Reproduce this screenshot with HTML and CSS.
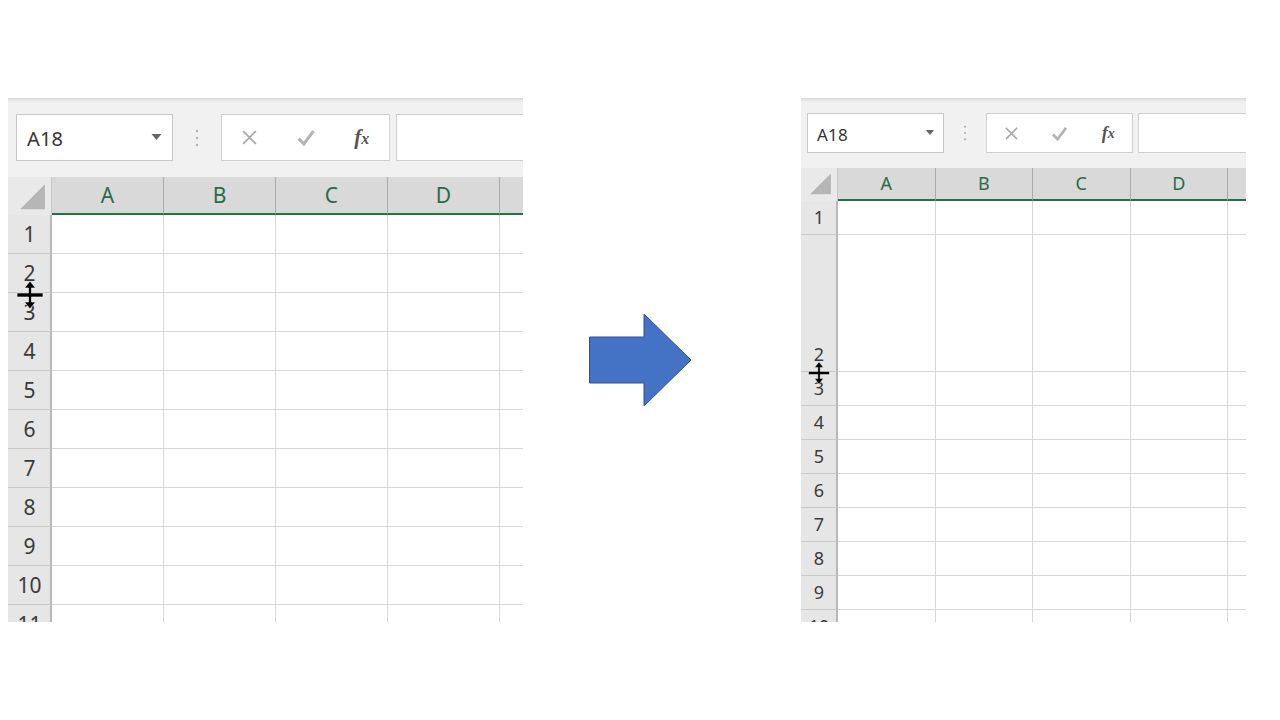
FILE: index.html
```html
<!DOCTYPE html>
<html lang="ja">
<head>
<meta charset="utf-8">
<title>Row height change</title>
<link rel="stylesheet" href="styles.css">
</head>
<body>
<div class="page">
  <div class="sheet sheet-before">
    <div class="toolbar">
      <div class="namebox"><span class="name">A18</span><svg class="dd" viewBox="0 0 10 6"><path d="M0 0H10L5 6Z"/></svg></div>
      <svg class="dots" viewBox="0 0 6 18"><circle cx="3" cy="2" r="1.2"/><circle cx="3" cy="9" r="1.2"/><circle cx="3" cy="16" r="1.2"/></svg>
      <div class="fbtns">
        <span class="fbtn"><svg class="ic-x" viewBox="0 0 16 16"><path d="M2 2L14 14M14 2L2 14"/></svg></span>
        <span class="fbtn"><svg class="ic-ok" viewBox="0 0 18 16"><path d="M2 9L7 14L16 2"/></svg></span>
        <span class="fbtn fx"><span class="f">f</span><span class="x">x</span></span>
      </div>
      <div class="finput"></div>
    </div>
    <div class="grid">
      <div class="hrow"><div class="corner"><svg class="tri" viewBox="0 0 10 10"><path d="M10 0V10H0Z"/></svg></div><div class="ch">A</div><div class="ch">B</div><div class="ch">C</div><div class="ch">D</div><div class="ch part"></div></div>
      <div class="row"><div class="rh"><span>1</span></div><div class="c"></div><div class="c"></div><div class="c"></div><div class="c"></div><div class="c part"></div></div>
      <div class="row"><div class="rh"><span>2</span></div><div class="c"></div><div class="c"></div><div class="c"></div><div class="c"></div><div class="c part"></div></div>
      <div class="row"><div class="rh"><span>3</span></div><div class="c"></div><div class="c"></div><div class="c"></div><div class="c"></div><div class="c part"></div></div>
      <div class="row"><div class="rh"><span>4</span></div><div class="c"></div><div class="c"></div><div class="c"></div><div class="c"></div><div class="c part"></div></div>
      <div class="row"><div class="rh"><span>5</span></div><div class="c"></div><div class="c"></div><div class="c"></div><div class="c"></div><div class="c part"></div></div>
      <div class="row"><div class="rh"><span>6</span></div><div class="c"></div><div class="c"></div><div class="c"></div><div class="c"></div><div class="c part"></div></div>
      <div class="row"><div class="rh"><span>7</span></div><div class="c"></div><div class="c"></div><div class="c"></div><div class="c"></div><div class="c part"></div></div>
      <div class="row"><div class="rh"><span>8</span></div><div class="c"></div><div class="c"></div><div class="c"></div><div class="c"></div><div class="c part"></div></div>
      <div class="row"><div class="rh"><span>9</span></div><div class="c"></div><div class="c"></div><div class="c"></div><div class="c"></div><div class="c part"></div></div>
      <div class="row"><div class="rh"><span>10</span></div><div class="c"></div><div class="c"></div><div class="c"></div><div class="c"></div><div class="c part"></div></div>
      <div class="row"><div class="rh"><span>11</span></div><div class="c"></div><div class="c"></div><div class="c"></div><div class="c"></div><div class="c part"></div></div>
    </div>
    <svg class="cursor" viewBox="0 0 30 30"><path class="cur" d="M15 1L9.5 8H13.5V13H2V17H13.5V22H9.5L15 29L20.5 22H16.5V17H28V13H16.5V8H20.5Z"/></svg>
  </div>

  <svg class="arrow" viewBox="0 0 103 94"><path d="M0.5 24H55V1L102 47L55 93V70H0.5Z"/></svg>

  <div class="sheet sheet-after">
    <div class="toolbar">
      <div class="namebox"><span class="name">A18</span><svg class="dd" viewBox="0 0 10 6"><path d="M0 0H10L5 6Z"/></svg></div>
      <svg class="dots" viewBox="0 0 6 18"><circle cx="3" cy="2" r="1.2"/><circle cx="3" cy="9" r="1.2"/><circle cx="3" cy="16" r="1.2"/></svg>
      <div class="fbtns">
        <span class="fbtn"><svg class="ic-x" viewBox="0 0 16 16"><path d="M2 2L14 14M14 2L2 14"/></svg></span>
        <span class="fbtn"><svg class="ic-ok" viewBox="0 0 18 16"><path d="M2 9L7 14L16 2"/></svg></span>
        <span class="fbtn fx"><span class="f">f</span><span class="x">x</span></span>
      </div>
      <div class="finput"></div>
    </div>
    <div class="grid">
      <div class="hrow"><div class="corner"><svg class="tri" viewBox="0 0 10 10"><path d="M10 0V10H0Z"/></svg></div><div class="ch">A</div><div class="ch">B</div><div class="ch">C</div><div class="ch">D</div><div class="ch part"></div></div>
      <div class="row"><div class="rh"><span>1</span></div><div class="c"></div><div class="c"></div><div class="c"></div><div class="c"></div><div class="c part"></div></div>
      <div class="row tall"><div class="rh"><span>2</span></div><div class="c"></div><div class="c"></div><div class="c"></div><div class="c"></div><div class="c part"></div></div>
      <div class="row"><div class="rh"><span>3</span></div><div class="c"></div><div class="c"></div><div class="c"></div><div class="c"></div><div class="c part"></div></div>
      <div class="row"><div class="rh"><span>4</span></div><div class="c"></div><div class="c"></div><div class="c"></div><div class="c"></div><div class="c part"></div></div>
      <div class="row"><div class="rh"><span>5</span></div><div class="c"></div><div class="c"></div><div class="c"></div><div class="c"></div><div class="c part"></div></div>
      <div class="row"><div class="rh"><span>6</span></div><div class="c"></div><div class="c"></div><div class="c"></div><div class="c"></div><div class="c part"></div></div>
      <div class="row"><div class="rh"><span>7</span></div><div class="c"></div><div class="c"></div><div class="c"></div><div class="c"></div><div class="c part"></div></div>
      <div class="row"><div class="rh"><span>8</span></div><div class="c"></div><div class="c"></div><div class="c"></div><div class="c"></div><div class="c part"></div></div>
      <div class="row"><div class="rh"><span>9</span></div><div class="c"></div><div class="c"></div><div class="c"></div><div class="c"></div><div class="c part"></div></div>
      <div class="row"><div class="rh"><span>10</span></div><div class="c"></div><div class="c"></div><div class="c"></div><div class="c"></div><div class="c part"></div></div>
    </div>
    <svg class="cursor" viewBox="0 0 30 30"><path class="cur" d="M15 1L9.5 8H13.5V13H2V17H13.5V22H9.5L15 29L20.5 22H16.5V17H28V13H16.5V8H20.5Z"/></svg>
  </div>
</div>
</body>
</html>
```

FILE: styles.css
```css
* { box-sizing: border-box; }
html, body { margin: 0; background: #ffffff; }
body { font-family: "Noto Sans", "Open Sans", "Noto Sans CJK JP", sans-serif; }

.page {
  display: flex;
  align-items: flex-start;
  padding: 98px 0 0 8px;
  height: 720px;
}

/* ---------- sheet (before: larger zoom) ---------- */
.sheet {
  position: relative;
  overflow: hidden;
  flex-shrink: 0;
  width: 515px;
  height: 524px;
  --rh: 44px;
  --cw: 112px;
  --hh: 36px;
  --rowh: 39px;
  --fs: 21px;
}

.toolbar {
  display: flex;
  align-items: center;
  height: 79px;
  padding-left: 8px;
  background: linear-gradient(#d8d8d8 0, #ececec 3px, #f1f1f1 6px, #f1f1f1 100%);
}

.namebox {
  position: relative;
  display: flex;
  align-items: center;
  justify-content: space-between;
  flex-shrink: 0;
  width: 157px;
  height: 47px;
  padding: 2px 10px 0 10px;
  background: #ffffff;
  border: 1px solid #c8c8c8;
}
.name { font-size: 20px; color: #333333; letter-spacing: 0.2px; }
.dd { width: 11px; height: 6px; fill: #666666; margin-bottom: 4px; }

.dots { width: 6px; height: 18px; margin: 0 21px; fill: #b3b3b3; flex-shrink: 0; }

.fbtns {
  display: flex;
  align-items: center;
  flex-shrink: 0;
  width: 169px;
  height: 47px;
  background: #ffffff;
  border: 1px solid #cfcfcf;
}
.fbtn {
  width: 56px;
  display: flex;
  align-items: center;
  justify-content: center;
}
.ic-x { width: 17px; height: 17px; fill: none; stroke: #a9a9a9; stroke-width: 1.6; }
.ic-ok { width: 20px; height: 17px; fill: none; stroke: #b4b4b4; stroke-width: 3; }
.fx {
  font-family: "Liberation Serif", "DejaVu Serif", serif;
  font-style: italic;
  font-weight: bold;
  color: #555555;
  padding-left: 1px;
}
.fx .f { font-size: 21px; }
.fx .x { font-size: 16px; position: relative; top: 1px; margin-left: 0; }

.finput {
  flex-shrink: 0;
  width: 200px;
  height: 47px;
  margin-left: 6px;
  background: #ffffff;
  border: 1px solid #cfcfcf;
}

/* ---------- grid ---------- */
.grid { display: flex; flex-direction: column; }

.hrow { display: flex; height: calc(var(--hh) + 2px); }
.corner {
  position: relative;
  flex-shrink: 0;
  width: var(--rh);
  height: 100%;
  background: #e9e9e9;
  border-right: 1px solid #c9c9c9;
}
.tri {
  position: absolute;
  right: 6px;
  bottom: 5px;
  width: 58%;
  height: 72%;
  fill: #b6b6b6;
}
.ch {
  flex-shrink: 0;
  width: var(--cw);
  height: 100%;
  background: #d9d9d9;
  border-right: 1px solid #ababab;
  border-bottom: 2px solid #217346;
  color: #2b6a49;
  font-size: var(--fs);
  text-align: center;
  line-height: var(--hh);
}
.ch.part, .c.part { flex: 1 0 auto; width: auto; border-right: none; }

.row { display: flex; height: var(--rowh); }
.rh {
  flex-shrink: 0;
  width: var(--rh);
  height: 100%;
  display: flex;
  align-items: flex-end;
  justify-content: center;
  background: #e6e6e6;
  border-right: 2px solid #b8b8b8;
  border-bottom: 1px solid #c8c8c8;
  color: #3a3a3a;
  font-size: var(--fs);
  padding-left: 1px;
}
.rh span { line-height: calc(var(--rowh) - 1px); }
.c {
  flex-shrink: 0;
  width: var(--cw);
  height: 100%;
  border-right: 1px solid #d6d6d6;
  border-bottom: 1px solid #d6d6d6;
}

.cursor {
  position: absolute;
  left: 7px;
  top: 182px;
  width: 30px;
  height: 30px;
}
.cur { fill: #000000; stroke: #ffffff; stroke-width: 0.6; stroke-linejoin: miter; }

/* ---------- arrow ---------- */
.arrow {
  flex-shrink: 0;
  width: 103px;
  height: 94px;
  margin: 215px 0 0 66px;
}
.arrow path { fill: #4472c4; stroke: #2f528f; stroke-width: 1; }

/* ---------- sheet (after: smaller zoom) ---------- */
.sheet-after {
  width: 445px;
  margin-left: 109px;
  --rh: 37px;
  --cw: 97.5px;
  --hh: 31px;
  --rowh: 34px;
  --fs: 18px;
}
.sheet-after .toolbar { height: 70px; padding-left: 6px; }
.sheet-after .namebox { width: 137px; height: 40px; padding: 2px 8px 0 9px; }
.sheet-after .name { font-size: 17px; }
.sheet-after .dd { width: 10px; height: 5px; }
.sheet-after .dots { height: 16px; margin: 0 18px; }
.sheet-after .fbtns { width: 147px; height: 40px; }
.sheet-after .fbtn { width: 49px; }
.sheet-after .ic-x { width: 15px; height: 15px; }
.sheet-after .ic-ok { width: 17px; height: 15px; }
.sheet-after .fx .f { font-size: 18px; }
.sheet-after .fx .x { font-size: 14px; }
.sheet-after .finput { height: 40px; margin-left: 5px; }
.sheet-after .row.tall { height: 137px; }
.sheet-after .cursor { left: 6px; top: 263px; width: 24px; height: 24px; }
```
